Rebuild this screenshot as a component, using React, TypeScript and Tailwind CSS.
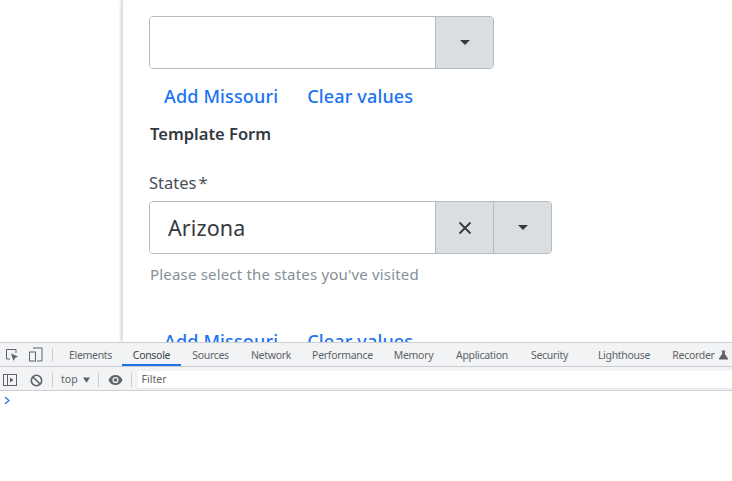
import React from "react";

function Caret() {
  return (
    <svg width="10" height="5" viewBox="0 0 10 5" className="block">
      <path d="M0 0H10L5 5Z" fill="#343a40" />
    </svg>
  );
}

function Select({ value, clear }: { value?: string; clear?: boolean }) {
  return (
    <div className="flex h-[53px] w-max rounded-[4px] border border-[#b5bbc2] overflow-hidden">
      <div className="w-[285px] pl-[18px] pt-[2px] flex items-center bg-white text-[21.5px] tracking-[0.1px] text-[#343a40]">{value}</div>
      <div className="flex bg-[#dbdee1]">
        {clear && (
          <div className="w-[58px] flex items-center justify-center border-l border-[#b5bbc2]">
            <svg width="14" height="14" viewBox="0 0 14 14" fill="none" stroke="#343a40" strokeWidth="1.8">
              <path d="M1.5 1.5L12.5 12.5M12.5 1.5L1.5 12.5" />
            </svg>
          </div>
        )}
        <div className="w-[58px] flex items-center justify-center border-l border-[#b5bbc2]">
          <Caret />
        </div>
      </div>
    </div>
  );
}

function Links() {
  return (
    <div className="flex gap-[29px] pl-[15px] text-[18px] leading-[24px] font-medium tracking-[0.15px] text-[#1a73f0]">
      <span>Add Missouri</span>
      <span>Clear values</span>
    </div>
  );
}

function Tab({ label, active, className = "" }: { label: string; active?: boolean; className?: string }) {
  return (
    <div
      className={
        "h-full flex items-center justify-center whitespace-nowrap text-[10.5px] tracking-[-0.3px] " +
        (active ? "text-[#3c4043] border-b-2 border-[#1a73e8] pt-[4px] " : "text-[#5f6368] pt-[2px] ") +
        className
      }
    >
      {label}
    </div>
  );
}

export default function App() {
  return (
    <div className="w-[732px] h-[481px] flex flex-col overflow-hidden bg-white font-['Noto_Sans','Open_Sans',sans-serif]">
      <div className="h-[342px] overflow-hidden pl-[122px] shrink-0">
        <div className="h-full border-l border-[#e2e2e2] shadow-[-1px_0_3px_rgba(0,0,0,0.2)] pl-[26px] pt-[16px]">
          <Select />
          <div className="mt-[15px]">
            <Links />
          </div>
          <div className="mt-[14px] ml-px text-[16.5px] leading-[24px] font-semibold text-[#343a40]">Template Form</div>
          <div className="mt-[25px] text-[16.5px] leading-[24px] text-[#495057] flex">
            <span>States</span>
            <span className="ml-[2px]">*</span>
          </div>
          <div className="mt-[6px]">
            <Select value="Arizona" clear />
          </div>
          <div className="mt-[8px] ml-px text-[15px] leading-[24px] tracking-[0.18px] text-[#868e96]">Please select the states you've visited</div>
          <div className="mt-[43px]">
            <Links />
          </div>
        </div>
      </div>

      <div className="h-[25px] shrink-0 flex items-center bg-[#f1f3f4] border-t border-b border-[#cbcdd0]">
        <div className="w-[52px] shrink-0 flex items-center pl-[5px] gap-[10px]">
          <svg width="14" height="14" viewBox="0 0 14 14" fill="none">
            <path d="M5 11H1.5V1.5H11V5" stroke="#5f6368" strokeWidth="1" />
            <path d="M6 5.5L13 8.5L10 10L8.5 13Z" fill="#5f6368" />
          </svg>
          <svg width="14" height="15" viewBox="0 0 14 15" fill="none" stroke="#5f6368" strokeWidth="1">
            <rect x="0.5" y="5" width="6" height="9" />
            <path d="M4 1H13V14H8" />
          </svg>
        </div>
        <div className="w-px h-[14px] bg-[#cbcdd0] shrink-0" />
        <div className="flex h-full items-center ml-[6px]">
          <Tab label="Elements" className="w-[63px]" />
          <Tab label="Console" active className="w-[59px]" />
          <Tab label="Sources" className="w-[59px]" />
          <Tab label="Network" className="w-[62px]" />
          <Tab label="Performance" className="w-[81px]" />
          <Tab label="Memory" className="w-[61px]" />
          <Tab label="Application" className="w-[76px]" />
          <Tab label="Security" className="w-[59px]" />
          <Tab label="Lighthouse" className="w-[90px]" />
          <Tab label="Recorder" className="w-[49px]" />
          <svg width="9" height="10" viewBox="0 0 10 10" className="ml-[1px] shrink-0">
            <path d="M3 0H7V1H6.5V4L10 9V10H0V9L3.5 4V1H3Z" fill="#5f6368" />
          </svg>
        </div>
      </div>

      <div className="h-[24px] shrink-0 flex items-center pt-[3px] bg-[#f1f3f4] border-b border-[#cbcdd0]">
        <svg width="14" height="12" viewBox="0 0 14 12" fill="none" className="ml-[3px] shrink-0">
          <rect x="0.5" y="0.5" width="13" height="11" stroke="#5f6368" />
          <path d="M4.5 0.5V11.5" stroke="#5f6368" />
          <path d="M7 3.5L10.5 6L7 8.5Z" fill="#5f6368" />
        </svg>
        <svg width="13" height="13" viewBox="0 0 13 13" fill="none" stroke="#5f6368" strokeWidth="1.6" className="ml-[13px] shrink-0">
          <circle cx="6.5" cy="6.5" r="5.2" />
          <path d="M3 3L10 10" />
        </svg>
        <div className="w-px h-[14px] bg-[#cbcdd0] ml-[9px] shrink-0" />
        <span className="ml-[8px] text-[10.5px] text-[#5f6368]">top</span>
        <svg width="7" height="6" viewBox="0 0 8 6" className="ml-[5px] shrink-0">
          <path d="M0 0H8L4 6Z" fill="#5f6368" />
        </svg>
        <div className="w-px h-[14px] bg-[#cbcdd0] ml-[8px] shrink-0" />
        <svg width="15" height="10" viewBox="0 0 16 11" className="ml-[9px] shrink-0">
          <path d="M8 0C4.5 0 1.5 2.2 0.3 5.5C1.5 8.8 4.5 11 8 11C11.5 11 14.5 8.8 15.7 5.5C14.5 2.2 11.5 0 8 0Z" fill="#5f6368" />
          <circle cx="8" cy="5.5" r="3.4" fill="#f1f3f4" />
          <circle cx="8" cy="5.5" r="2" fill="#5f6368" />
        </svg>
        <div className="w-px h-[14px] bg-[#cbcdd0] ml-[8px] shrink-0" />
        <div className="ml-[6px] flex-1 h-[18px] bg-white flex items-center pl-[4px] text-[10.5px] text-[#5f6368] border-b border-[#e6e6e6]">Filter</div>
      </div>

      <div className="flex-1 bg-white pl-[4px] pt-[5px]">
        <svg width="6" height="9" viewBox="0 0 6 9" fill="none" stroke="#1a73e8" strokeWidth="1.2">
          <path d="M1 1L5 4.5L1 8" />
        </svg>
      </div>
    </div>
  );
}
